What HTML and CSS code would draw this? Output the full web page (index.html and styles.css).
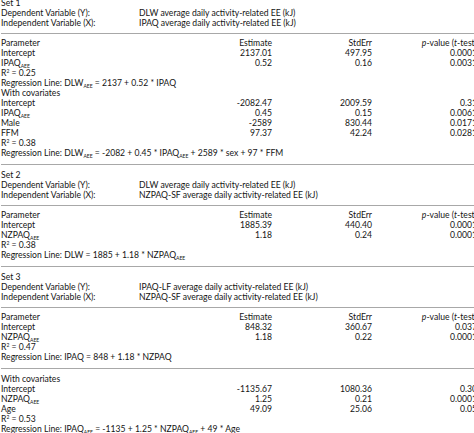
FILE: index.html
```html
<!DOCTYPE html>
<html>
<head>
<meta charset="utf-8">
<link rel="stylesheet" href="styles.css">
</head>
<body>
<div class="page">
  <div class="row hd"><span class="c1">Set 1</span></div>
  <div class="row hd"><span class="c1">Dependent Variable (Y):</span><span class="c2">DLW average daily activity-related EE (kJ)</span></div>
  <div class="row hd"><span class="c1">Independent Variable (X):</span><span class="c2">IPAQ average daily activity-related EE (kJ)</span></div>
  <div class="sep a"></div>
  <div class="row t"><span>Parameter</span><span class="n">Estimate</span><span class="n">StdErr</span><span class="n"><i>p</i>-value (<i>t</i>-test)</span></div>
  <div class="row t"><span>Intercept</span><span class="n">2137.01</span><span class="n">497.95</span><span class="n">0.0001</span></div>
  <div class="row t"><span>IPAQ<sub>AEE</sub></span><span class="n">0.52</span><span class="n">0.16</span><span class="n">0.0031</span></div>
  <div class="row"><span>R<sup>2</sup> = 0.25</span></div>
  <div class="row"><span>Regression Line: DLW<sub>AEE</sub> = 2137 + 0.52 * IPAQ</span></div>
  <div class="row"><span>With covariates</span></div>
  <div class="row t"><span>Intercept</span><span class="n">-2082.47</span><span class="n">2009.59</span><span class="n">0.31</span></div>
  <div class="row t"><span>IPAQ<sub>AEE</sub></span><span class="n">0.45</span><span class="n">0.15</span><span class="n">0.0061</span></div>
  <div class="row t"><span>Male</span><span class="n">-2589</span><span class="n">830.44</span><span class="n">0.0171</span></div>
  <div class="row t"><span>FFM</span><span class="n">97.37</span><span class="n">42.24</span><span class="n">0.0281</span></div>
  <div class="row"><span>R<sup>2</sup> = 0.38</span></div>
  <div class="row"><span>Regression Line: DLW<sub>AEE</sub> = -2082 + 0.45 * IPAQ<sub>AEE</sub> + 2589 * sex + 97 * FFM</span></div>
  <div class="sep b"></div>
  <div class="row hd"><span class="c1">Set 2</span></div>
  <div class="row hd"><span class="c1">Dependent Variable (Y):</span><span class="c2">DLW average daily activity-related EE (kJ)</span></div>
  <div class="row hd"><span class="c1">Independent Variable (X):</span><span class="c2">NZPAQ-SF average daily activity-related EE (kJ)</span></div>
  <div class="sep a"></div>
  <div class="row t"><span>Parameter</span><span class="n">Estimate</span><span class="n">StdErr</span><span class="n"><i>p</i>-value (<i>t</i>-test)</span></div>
  <div class="row t"><span>Intercept</span><span class="n">1885.39</span><span class="n">440.40</span><span class="n">0.0001</span></div>
  <div class="row t"><span>NZPAQ<sub>AEE</sub></span><span class="n">1.18</span><span class="n">0.24</span><span class="n">0.0001</span></div>
  <div class="row"><span>R<sup>2</sup> = 0.38</span></div>
  <div class="row"><span>Regression Line: DLW = 1885 + 1.18 * NZPAQ<sub>AEE</sub></span></div>
  <div class="sep b"></div>
  <div class="row hd"><span class="c1">Set 3</span></div>
  <div class="row hd"><span class="c1">Dependent Variable (Y):</span><span class="c2">IPAQ-LF average daily activity-related EE (kJ)</span></div>
  <div class="row hd"><span class="c1">Independent Variable (X):</span><span class="c2">NZPAQ-SF average daily activity-related EE (kJ)</span></div>
  <div class="sep a"></div>
  <div class="row t"><span>Parameter</span><span class="n">Estimate</span><span class="n">StdErr</span><span class="n"><i>p</i>-value (<i>t</i>-test)</span></div>
  <div class="row t"><span>Intercept</span><span class="n">848.32</span><span class="n">360.67</span><span class="n">0.037</span></div>
  <div class="row t"><span>NZPAQ<sub>AEE</sub></span><span class="n">1.18</span><span class="n">0.22</span><span class="n">0.0001</span></div>
  <div class="row"><span>R<sup>2</sup> = 0.47</span></div>
  <div class="row"><span>Regression Line: IPAQ = 848 + 1.18 * NZPAQ</span></div>
  <div class="sep b"></div>
  <div class="row"><span>With covariates</span></div>
  <div class="row t"><span>Intercept</span><span class="n">-1135.67</span><span class="n">1080.36</span><span class="n">0.30</span></div>
  <div class="row t"><span>NZPAQ<sub>AEE</sub></span><span class="n">1.25</span><span class="n">0.21</span><span class="n">0.0001</span></div>
  <div class="row t"><span>Age</span><span class="n">49.09</span><span class="n">25.06</span><span class="n">0.05</span></div>
  <div class="row"><span>R<sup>2</sup> = 0.53</span></div>
  <div class="row"><span>Regression Line: IPAQ<sub>AEE</sub> = -1135 + 1.25 * NZPAQ<sub>AEE</sub> + 49 * Age</span></div>
</div>
</body>
</html>
```
FILE: styles.css
```css
html, body {
  margin: 0;
  padding: 0;
  background: #ffffff;
  overflow: hidden;
}
.page {
  width: 477px;
  margin-top: -2px;
  padding-left: 1px;
  font-family: "Lato", "DejaVu Sans", sans-serif;
  font-size: 8.6px;
  color: #141414;
}
.row {
  height: 10px;
  line-height: 10px;
  white-space: nowrap;
}
.row.hd {
  display: grid;
  grid-template-columns: 138px 1fr;
}
.row.t {
  display: grid;
  grid-template-columns: 171px 100px 100px 105px;
}
.n {
  text-align: right;
}
sub {
  font-size: 5px;
  line-height: 0;
  vertical-align: -1.5px;
}
sup {
  font-size: 5px;
  line-height: 0;
  vertical-align: 3px;
}
.sep {
  display: flex;
  align-items: center;
}
.sep::after {
  content: "";
  display: block;
  width: 100%;
  border-top: 1px solid #a8a8a8;
}
.sep.a {
  height: 10px;
}
.sep.b {
  height: 12px;
}
```
